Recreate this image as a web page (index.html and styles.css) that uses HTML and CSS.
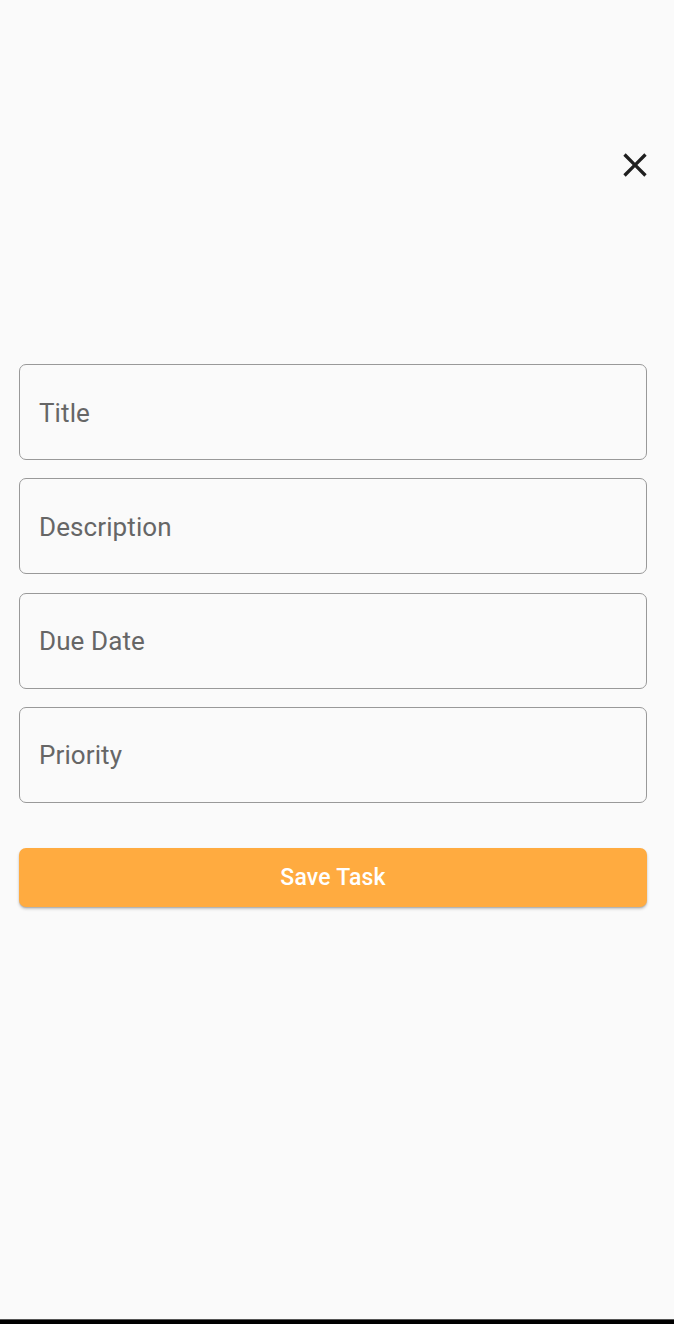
FILE: index.html
```html
<!DOCTYPE html>
<html lang="en">
<head>
<meta charset="utf-8">
<title>Add Task</title>
<link rel="stylesheet" href="styles.css">
</head>
<body>
<div class="screen">
  <header class="topbar">
    <button class="close" aria-label="Close">
      <svg viewBox="0 0 24 24" width="40" height="40"><path d="M19 6.41L17.59 5 12 10.59 6.41 5 5 6.41 10.59 12 5 17.59 6.41 19 12 13.41 17.59 19 19 17.59 13.41 12z" fill="#1f1f1f"/></svg>
    </button>
  </header>
  <form class="form">
    <div class="field"><span class="label">Title</span></div>
    <div class="field"><span class="label">Description</span></div>
    <div class="field"><span class="label">Due Date</span></div>
    <div class="field"><span class="label">Priority</span></div>
    <button type="button" class="save">Save Task</button>
  </form>
  <div class="spacer"></div>
  <div class="navedge"></div>
</div>
</body>
</html>
```

FILE: styles.css
```css
html, body {
  margin: 0;
  padding: 0;
  background: #fafafa;
}
body {
  font-family: Roboto, "Liberation Sans", sans-serif;
}
.screen {
  width: 674px;
  height: 1324px;
  display: flex;
  flex-direction: column;
  background: #fafafa;
}
.topbar {
  height: 364px;
  flex: none;
  display: flex;
  justify-content: flex-end;
  align-items: flex-start;
  padding-top: 145px;
  padding-right: 19px;
  box-sizing: border-box;
}
.close {
  width: 40px;
  height: 40px;
  padding: 0;
  border: none;
  background: transparent;
  display: flex;
}
.form {
  display: flex;
  flex-direction: column;
  gap: 18.3px;
  padding: 0 27px 0 19px;
  margin: 0;
}
.field {
  height: 96px;
  box-sizing: border-box;
  border: 1.75px solid #999999;
  border-radius: 7px;
  display: flex;
  align-items: center;
  padding-left: 19px;
}
.label {
  font-size: 26px;
  color: #666666;
  letter-spacing: 0.1px;
  padding-top: 1px;
}
.save {
  margin-top: 26.7px;
  height: 59px;
  border: none;
  border-radius: 7px;
  background: #ffab40;
  color: #ffffff;
  font-family: Roboto, "Liberation Sans", sans-serif;
  font-weight: 500;
  font-size: 23px;
  letter-spacing: 0.2px;
  box-shadow: 0 2px 3px rgba(0,0,0,0.22), 0 1px 1px rgba(0,0,0,0.12);
}
.spacer {
  flex: 1;
}
.navedge {
  height: 4px;
  background: #000;
  border-top: 1px solid #555;
  flex: none;
}
```
